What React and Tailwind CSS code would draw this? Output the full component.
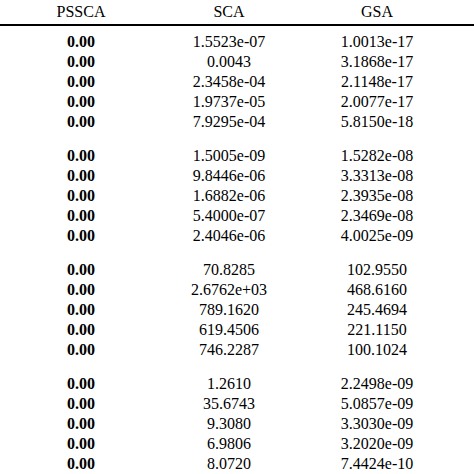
const groups = [
  [
    ["1.5523e-07", "1.0013e-17"],
    ["0.0043", "3.1868e-17"],
    ["2.3458e-04", "2.1148e-17"],
    ["1.9737e-05", "2.0077e-17"],
    ["7.9295e-04", "5.8150e-18"],
  ],
  [
    ["1.5005e-09", "1.5282e-08"],
    ["9.8446e-06", "3.3313e-08"],
    ["1.6882e-06", "2.3935e-08"],
    ["5.4000e-07", "2.3469e-08"],
    ["2.4046e-06", "4.0025e-09"],
  ],
  [
    ["70.8285", "102.9550"],
    ["2.6762e+03", "468.6160"],
    ["789.1620", "245.4694"],
    ["619.4506", "221.1150"],
    ["746.2287", "100.1024"],
  ],
  [
    ["1.2610", "2.2498e-09"],
    ["35.6743", "5.0857e-09"],
    ["9.3080", "3.3030e-09"],
    ["6.9806", "3.2020e-09"],
    ["8.0720", "7.4424e-10"],
  ],
];

export default function App() {
  return (
    <div className="w-[474px] h-[474px] overflow-hidden bg-white text-black font-['Liberation_Serif','Times_New_Roman',serif] text-[16px] leading-[20px]">
      {/* Header */}
      <div className="grid grid-cols-[148px_148px_148px] pl-[7px] pt-[2px] text-center">
        <div>PSSCA</div>
        <div>SCA</div>
        <div>GSA</div>
      </div>
      <div className="mt-[2px] h-[2px] bg-black" />

      {/* Body */}
      <div className="pt-[6px] flex flex-col gap-[14px]">
        {groups.map((rows, gi) => (
          <div key={gi}>
            {rows.map(([sca, gsa], ri) => (
              <div key={ri} className="grid grid-cols-[148px_148px_148px] pl-[7px] text-center">
                <div className="font-bold">0.00</div>
                <div>{sca}</div>
                <div>{gsa}</div>
              </div>
            ))}
          </div>
        ))}
      </div>
    </div>
  );
}
